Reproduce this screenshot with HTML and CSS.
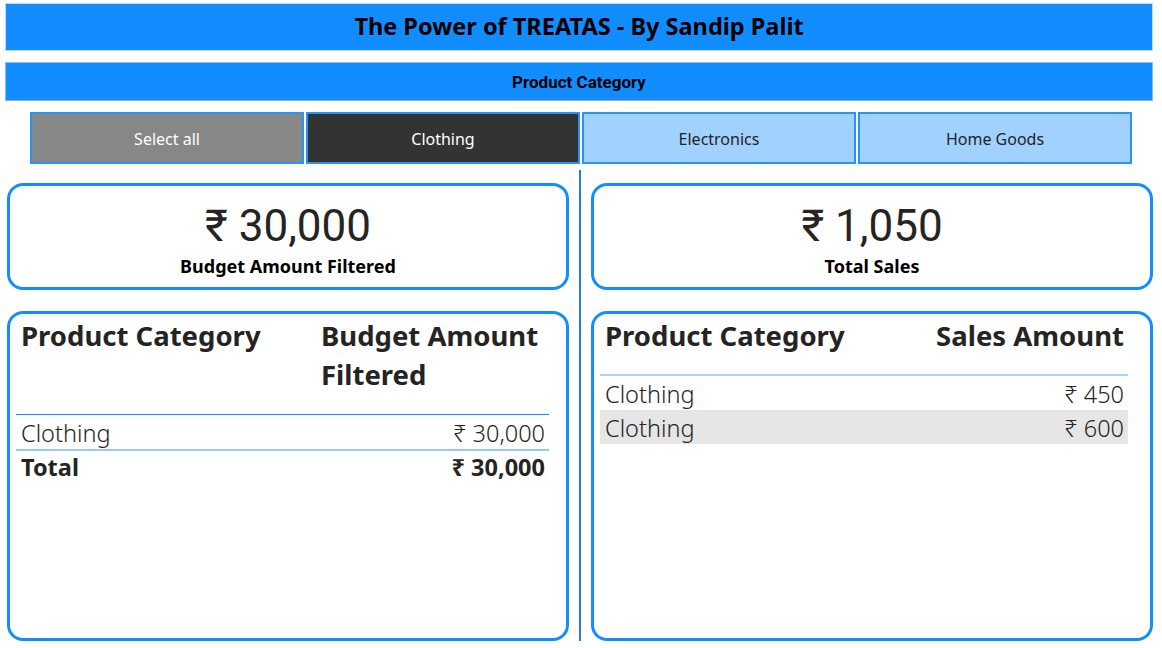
FILE: index.html
```html
<!DOCTYPE html>
<html>

<head>
    <meta charset='utf-8'>
    <title>The Power of TREATAS</title>
    <meta name='viewport' content='width=device-width, initial-scale=1'>
    <link rel="stylesheet" href="styles.css">
</head>

<body>
    <header class="title-bar">The Power of TREATAS - By Sandip Palit</header>

    <div class="slicer-title">Product Category</div>

    <div class="slicer">
        <div class="slicer-item slicer-all">Select all</div>
        <div class="slicer-item slicer-selected">Clothing</div>
        <div class="slicer-item">Electronics</div>
        <div class="slicer-item">Home Goods</div>
    </div>

    <main class="dashboard">
        <section class="column">
            <div class="card kpi">
                <div class="kpi-value">₹ 30,000</div>
                <div class="kpi-label">Budget Amount Filtered</div>
            </div>
            <div class="card table-card">
                <table class="matrix matrix-budget">
                    <thead>
                        <tr>
                            <th class="col-cat">Product Category</th>
                            <th class="col-num col-left">Budget Amount Filtered</th>
                        </tr>
                    </thead>
                    <tbody>
                        <tr class="row-line">
                            <td>Clothing</td>
                            <td class="num">₹ 30,000</td>
                        </tr>
                        <tr class="row-total">
                            <td>Total</td>
                            <td class="num">₹ 30,000</td>
                        </tr>
                    </tbody>
                </table>
            </div>
        </section>

        <div class="divider"></div>

        <section class="column">
            <div class="card kpi">
                <div class="kpi-value">₹ 1,050</div>
                <div class="kpi-label">Total Sales</div>
            </div>
            <div class="card table-card">
                <table class="matrix matrix-sales">
                    <thead>
                        <tr>
                            <th class="col-cat">Product Category</th>
                            <th class="col-num">Sales Amount</th>
                        </tr>
                    </thead>
                    <tbody>
                        <tr>
                            <td>Clothing</td>
                            <td class="num">₹ 450</td>
                        </tr>
                        <tr class="row-alt">
                            <td>Clothing</td>
                            <td class="num">₹ 600</td>
                        </tr>
                    </tbody>
                </table>
            </div>
        </section>
    </main>
</body>

</html>
```

FILE: styles.css
```css
body {
    margin: 0;
    padding: 3px 9px 0 5px;
    height: 648px;
    box-sizing: border-box;
    overflow: hidden;
    background: white;
    font-family: "Noto Sans", "DejaVu Sans", sans-serif;
    color: #252423;
}

.title-bar {
    height: 48px;
    box-sizing: border-box;
    background-color: #118dff;
    border: 1px solid #b6dbff;
    display: flex;
    align-items: center;
    justify-content: center;
    font-size: 23.5px;
    font-weight: bold;
    color: black;
    padding-bottom: 2px;
}

.slicer-title {
    margin-top: 11px;
    height: 39px;
    box-sizing: border-box;
    background-color: #118dff;
    border: 1px solid #7fc0ff;
    border-bottom-color: #9aa9b8;
    display: flex;
    align-items: center;
    justify-content: center;
    font-family: "Roboto", sans-serif;
    font-size: 17px;
    font-weight: bold;
    color: black;
}

.slicer {
    display: grid;
    grid-template-columns: repeat(4, 274px);
    column-gap: 2px;
    margin: 11px 0 0 25px;
    height: 52px;
}

.slicer-item {
    box-sizing: border-box;
    border: 2px solid #2b93f5;
    background-color: #a0d1ff;
    display: flex;
    align-items: center;
    justify-content: center;
    padding-top: 2px;
    font-size: 16px;
    color: #252423;
}

.slicer-all {
    background-color: #878787;
    color: white;
}

.slicer-selected {
    background-color: #333333;
    color: white;
}

.dashboard {
    display: flex;
    margin-top: 6px;
    padding-left: 2px;
    height: 471px;
}

.column {
    width: 562px;
    padding-top: 13px;
    display: flex;
    flex-direction: column;
    gap: 21px;
}

.divider {
    width: 2px;
    background-color: #2b7bd4;
    margin: 0 10px 0 10px;
}

.card {
    box-sizing: border-box;
    border: 3px solid #118dff;
    border-radius: 16px;
    background: white;
}

.kpi {
    height: 107px;
    display: flex;
    flex-direction: column;
    align-items: center;
    padding-top: 11px;
}

.kpi-value {
    font-family: "Roboto", "DejaVu Sans", sans-serif;
    font-size: 44px;
    line-height: 58px;
    color: #252423;
}

.kpi-label {
    font-size: 18px;
    font-weight: bold;
    color: black;
    line-height: 22px;
}

.table-card {
    flex: 1;
    padding: 2px 0 0 6px;
}

.matrix {
    border-collapse: collapse;
    font-size: 23.5px;
    color: #252423;
}

.matrix-budget {
    width: 533px;
}

.matrix-sales {
    width: 528px;
}

.matrix th {
    font-weight: bold;
    font-size: 27.5px;
    line-height: 39px;
    text-align: left;
    vertical-align: top;
    padding: 0 4px 20px 5px;
}

.matrix th.col-num {
    text-align: right;
}

.matrix th.col-left {
    text-align: left;
}

.matrix-budget .col-cat {
    width: 291px;
}

.matrix-sales .col-cat {
    width: 320px;
}

.matrix-sales th {
    padding-bottom: 19px;
}

.matrix-budget thead tr {
    border-bottom: 1px solid #118dff;
}

.matrix-sales thead tr {
    border-bottom: 2px solid #a8d4ff;
}

.matrix td {
    height: 34px;
    padding: 2px 4px 0 5px;
    box-sizing: border-box;
    line-height: 32px;
    font-weight: 300;
}

.matrix td.num {
    text-align: right;
}

.row-line {
    border-bottom: 2px solid #92c9ff;
}

.row-total td {
    font-weight: bold;
    height: 32px;
    padding-top: 0;
    line-height: 32px;
}

.row-alt td {
    background-color: #e6e6e6;
}
```
